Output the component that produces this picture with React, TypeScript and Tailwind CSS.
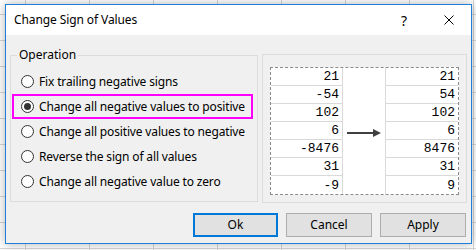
import { useState } from 'react';

const options = [
	'Fix trailing negative signs',
	'Change all negative values to positive',
	'Change all positive values to negative',
	'Reverse the sign of all values',
	'Change all negative value to zero',
];

const rows: [string, string][] = [
	['21', '21'],
	['-54', '54'],
	['102', '102'],
	['6', '6'],
	['-8476', '8476'],
	['31', '31'],
	['-9', '9'],
];

function Radio({ checked }: { checked: boolean }) {
	return (
		<span className="flex h-[13px] w-[13px] shrink-0 items-center justify-center rounded-full border border-[#333] bg-white">
			{checked && <span className="h-[7px] w-[7px] rounded-full bg-[#333]" />}
		</span>
	);
}

function PreviewTable() {
	return (
		<div className="flex w-[189px] border border-dashed border-[#8a8a8a] bg-white font-['Liberation_Mono',monospace] text-[13px] leading-none text-black">
			<div className="flex w-[72px] flex-col border-r border-[#d9d9d9]">
				{rows.map(([from], i) => (
					<div
						key={i}
						className="flex h-[18px] items-center justify-end border-b border-[#d9d9d9] pr-[3px] last:border-b-0">
						{from}
					</div>
				))}
			</div>
			<div className="flex w-[42px] items-center justify-center pt-[4px]">
				<svg width="34" height="8" viewBox="0 0 34 8">
					<line x1="0" y1="4" x2="27" y2="4" stroke="#404040" strokeWidth="2" />
					<polygon points="26,0 34,4 26,8" fill="#404040" />
				</svg>
			</div>
			<div className="flex w-[73px] flex-col border-l border-[#d9d9d9]">
				{rows.map(([, to], i) => (
					<div
						key={i}
						className="flex h-[18px] items-center justify-end border-b border-[#d9d9d9] pr-[3px] last:border-b-0">
						{to}
					</div>
				))}
			</div>
		</div>
	);
}

export default function App() {
	const [selected, setSelected] = useState<number>(1);
	return (
		<div className="h-[250px] w-[476px] overflow-hidden bg-white bg-[linear-gradient(to_right,#d6d6d6_1px,transparent_1px),linear-gradient(to_bottom,#d6d6d6_1px,transparent_1px)] bg-[size:64px_26px] bg-[position:25px_14px] pl-[5px] pt-[4px] font-['Noto_Sans',sans-serif] text-[12px] text-black">
			<div className="flex h-[240px] w-[467px] flex-col border border-[#1f7fd4] bg-[#f0f0f0] shadow-[0_0_10px_rgba(0,0,0,0.3)]">
				<div className="flex h-[30px] shrink-0 items-center bg-white pl-[8px] pr-[17px]">
					<span className="tracking-[-0.1px]">Change Sign of Values</span>
					<span className="ml-auto mr-[37px] text-[14px]">?</span>
					<svg width="10" height="10" viewBox="0 0 10 10">
						<path d="M0.5 0.5 L9.5 9.5 M9.5 0.5 L0.5 9.5" stroke="#000" strokeWidth="1" />
					</svg>
				</div>

				<div className="flex items-start gap-[4px] px-[4px] pt-[12px]">
					<fieldset className="h-[155px] w-[248px] border border-[#dcdcdc] px-0">
						<legend className="ml-[6px] px-[2px] leading-[16px]">Operation</legend>
						<div className="flex flex-col pt-[6px] tracking-[-0.15px]">
							{options.map((label, i) => (
								<label
									key={label}
									onClick={() => setSelected(i)}
									className={`ml-[1px] flex h-[25px] w-[241px] items-center gap-[5px] border-2 pl-[7px] ${
										i === 1 ? 'border-[#ff00ff]' : 'border-transparent'
									}`}>
									<Radio checked={selected === i} />
									<span className="whitespace-nowrap">{label}</span>
								</label>
							))}
						</div>
					</fieldset>

					<div className="mt-[7px] h-[149px] w-[205px] border border-[#dcdcdc] pl-[7px] pt-[12px]">
						<PreviewTable />
					</div>
				</div>

				<div className="mt-[10px] flex justify-end gap-[8px] pr-[5px]">
					<button className="h-[24px] w-[85px] border-2 border-[#0078d7] bg-[#e1e1e1]">Ok</button>
					<button className="h-[24px] w-[86px] border border-[#adadad] bg-[#e1e1e1]">Cancel</button>
					<button className="h-[24px] w-[86px] border border-[#adadad] bg-[#e1e1e1]">Apply</button>
				</div>
			</div>
		</div>
	);
}
